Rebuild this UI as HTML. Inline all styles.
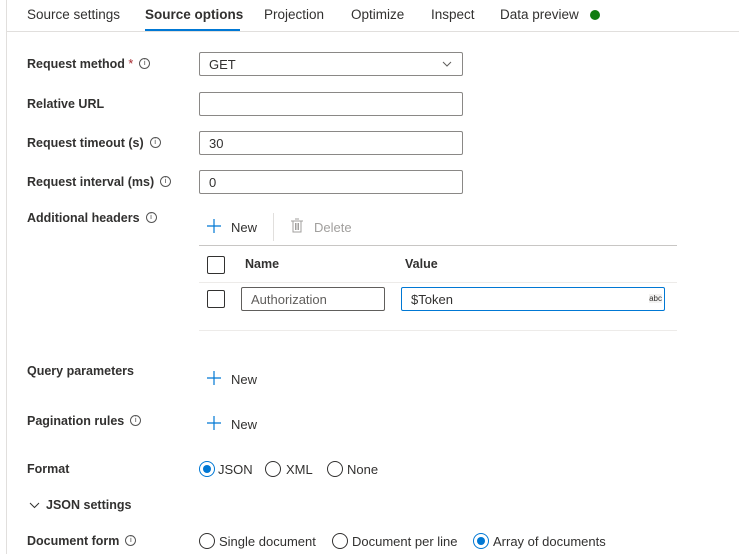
<html><head><style>
body{margin:0;width:739px;height:554px;background:#fff;font-family:"Liberation Sans",sans-serif;font-size:13px;color:#323130;position:relative;overflow:hidden}
.a{position:absolute;white-space:nowrap}
.lbl{position:absolute;left:27px;font-weight:bold;font-size:12.5px;color:#323130}
.inp{position:absolute;left:199px;width:264px;height:24px;border:1px solid #8a8886;border-radius:2px;box-sizing:border-box}
.inp span{position:absolute;left:9px;top:4px;font-size:13px}
.i{display:inline-block;width:9px;height:9px;border:1px solid #555;border-radius:50%;font-size:7px;line-height:9px;text-align:center;vertical-align:3px;margin-left:6px;font-weight:normal}
.cb{position:absolute;width:18px;height:18px;border:1px solid #323130;border-radius:2px;box-sizing:border-box}
.r{position:absolute;width:16px;height:16px;border:1px solid #323130;border-radius:50%;box-sizing:border-box}
.r.on{border-color:#0078d4}
.r.on:after{content:"";position:absolute;left:3px;top:3px;width:8px;height:8px;border-radius:50%;background:#0078d4}
</style></head><body>
<div class="a" style="left:6px;top:0;width:1px;height:554px;background:#e1dfdd"></div>
<div class="a" style="left:7px;top:31px;width:732px;height:1px;background:#e1dfdd"></div>
<div class="a" style="left:27px;top:7px;font-size:13.5px">Source settings</div>
<div class="a" style="left:145px;top:7px;font-size:13.5px;font-weight:bold">Source options</div>
<div class="a" style="left:145px;top:29px;width:95px;height:2px;background:#0078d4"></div>
<div class="a" style="left:264px;top:7px;font-size:13.5px">Projection</div>
<div class="a" style="left:351px;top:7px;font-size:13.5px">Optimize</div>
<div class="a" style="left:431px;top:7px;font-size:13.5px">Inspect</div>
<div class="a" style="left:500px;top:7px;font-size:13.5px">Data preview</div>
<div class="a" style="left:590px;top:10px;width:10px;height:10px;border-radius:50%;background:#107c10"></div>

<div class="lbl" style="top:57px">Request method <span style="color:#a4262c;font-weight:normal">*</span><span class="i">i</span></div>
<div class="inp" style="top:52px"><span>GET</span><svg style="position:absolute;right:10px;top:8px" width="10" height="7"><path d="M1 1L5 5L9 1" stroke="#605e5c" fill="none"/></svg></div>
<div class="lbl" style="top:97px">Relative URL</div>
<div class="inp" style="top:92px"></div>
<div class="lbl" style="top:136px">Request timeout (s)<span class="i">i</span></div>
<div class="inp" style="top:131px"><span>30</span></div>
<div class="lbl" style="top:175px">Request interval (ms)<span class="i">i</span></div>
<div class="inp" style="top:170px"><span>0</span></div>
<div class="lbl" style="top:211px">Additional headers<span class="i">i</span></div>

<svg class="a" style="left:207px;top:219px" width="14" height="14"><path d="M7 0V14M0 7H14" stroke="#0078d4" stroke-width="1.2"/></svg>
<div class="a" style="left:231px;top:220px">New</div>
<div class="a" style="left:273px;top:213px;width:1px;height:28px;background:#e1dfdd"></div>
<svg class="a" style="left:291px;top:218px" width="12" height="15"><rect x="2" y="3" width="8" height="11" fill="none" stroke="#a19f9d"/><path d="M0 3H12M4 1H8M4.5 5V12M6 5V12M7.5 5V12" stroke="#a19f9d"/></svg>
<div class="a" style="left:314px;top:220px;color:#a19f9d">Delete</div>
<div class="a" style="left:199px;top:245px;width:478px;height:1px;background:#c8c6c4"></div>
<div class="cb" style="left:207px;top:256px"></div>
<div class="a" style="left:245px;top:257px;font-weight:bold;font-size:12.5px">Name</div>
<div class="a" style="left:405px;top:257px;font-weight:bold;font-size:12.5px">Value</div>
<div class="a" style="left:199px;top:282px;width:478px;height:1px;background:#edebe9"></div>
<div class="cb" style="left:207px;top:290px"></div>
<div class="inp" style="left:241px;top:287px;width:144px;height:24px;border-color:#605e5c"><span style="color:#605e5c">Authorization</span></div>
<div class="inp" style="left:401px;top:287px;width:264px;height:24px;border-color:#0078d4"><span>$Token</span><span style="left:auto;right:2px;top:6px;font-size:8px;background:#f3f2f1">abc</span></div>
<div class="a" style="left:199px;top:330px;width:478px;height:1px;background:#edebe9"></div>

<div class="lbl" style="top:364px">Query parameters</div>
<svg class="a" style="left:207px;top:371px" width="14" height="14"><path d="M7 0V14M0 7H14" stroke="#0078d4" stroke-width="1.2"/></svg>
<div class="a" style="left:231px;top:372px">New</div>
<div class="lbl" style="top:414px">Pagination rules<span class="i">i</span></div>
<svg class="a" style="left:207px;top:416px" width="14" height="14"><path d="M7 0V14M0 7H14" stroke="#0078d4" stroke-width="1.2"/></svg>
<div class="a" style="left:231px;top:417px">New</div>

<div class="lbl" style="top:462px">Format</div>
<div class="r on" style="left:199px;top:461px"></div><div class="a" style="left:218px;top:462px">JSON</div>
<div class="r" style="left:265px;top:461px"></div><div class="a" style="left:286px;top:462px">XML</div>
<div class="r" style="left:327px;top:461px"></div><div class="a" style="left:347px;top:462px">None</div>

<svg class="a" style="left:29px;top:502px" width="11" height="7"><path d="M1 1L5.5 5.5L10 1" stroke="#323130" fill="none"/></svg>
<div class="a" style="left:46px;top:498px;font-weight:bold;font-size:12.5px">JSON settings</div>

<div class="lbl" style="top:534px">Document form<span class="i">i</span></div>
<div class="r" style="left:199px;top:533px"></div><div class="a" style="left:219px;top:534px">Single document</div>
<div class="r" style="left:332px;top:533px"></div><div class="a" style="left:352px;top:534px">Document per line</div>
<div class="r on" style="left:473px;top:533px"></div><div class="a" style="left:493px;top:534px">Array of documents</div>
</body></html>
